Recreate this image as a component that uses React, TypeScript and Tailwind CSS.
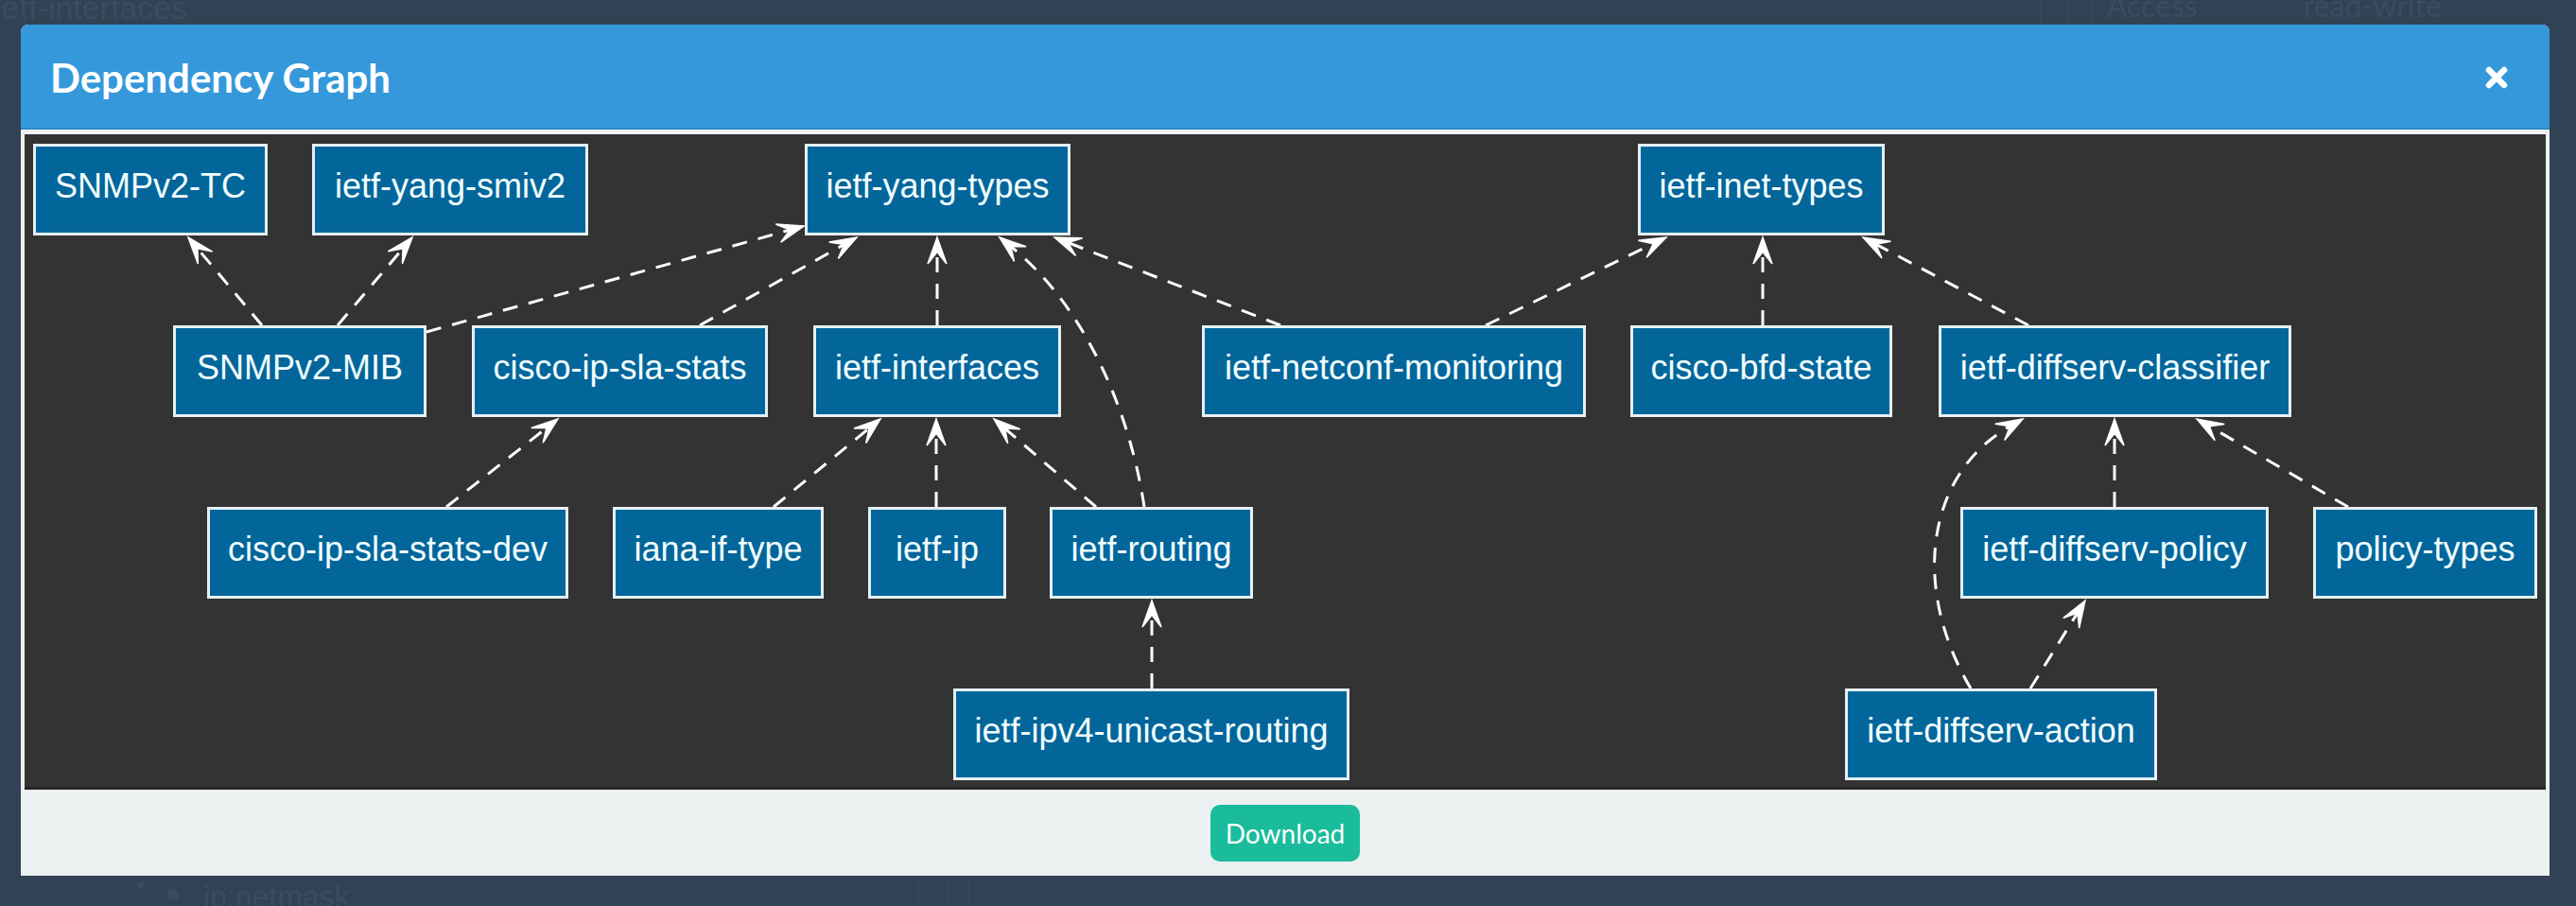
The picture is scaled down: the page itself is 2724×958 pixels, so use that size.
import React from "react";

type P = [number, number];
type Node = { label: string; x: number; row: number; w: number };
type Edge = { s: P; t: P; c?: [P, P] };

const ROWS = [10, 202, 394, 586];

const nodes: Node[] = [
  { label: "SNMPv2-TC", x: 9, row: 0, w: 248 },
  { label: "ietf-yang-smiv2", x: 304, row: 0, w: 292 },
  { label: "ietf-yang-types", x: 825, row: 0, w: 281 },
  { label: "ietf-inet-types", x: 1706, row: 0, w: 261 },
  { label: "SNMPv2-MIB", x: 157, row: 1, w: 268 },
  { label: "cisco-ip-sla-stats", x: 473, row: 1, w: 313 },
  { label: "ietf-interfaces", x: 834, row: 1, w: 262 },
  { label: "ietf-netconf-monitoring", x: 1245, row: 1, w: 406 },
  { label: "cisco-bfd-state", x: 1698, row: 1, w: 277 },
  { label: "ietf-diffserv-classifier", x: 2024, row: 1, w: 373 },
  { label: "cisco-ip-sla-stats-dev", x: 193, row: 2, w: 382 },
  { label: "iana-if-type", x: 622, row: 2, w: 223 },
  { label: "ietf-ip", x: 892, row: 2, w: 146 },
  { label: "ietf-routing", x: 1084, row: 2, w: 215 },
  { label: "ietf-diffserv-policy", x: 2047, row: 2, w: 326 },
  { label: "policy-types", x: 2420, row: 2, w: 237 },
  { label: "ietf-ipv4-unicast-routing", x: 982, row: 3, w: 419 },
  { label: "ietf-diffserv-action", x: 1925, row: 3, w: 330 },
];

const edges: Edge[] = [
  { s: [251, 202], t: [173, 109] },
  { s: [331, 202], t: [410, 109] },
  { s: [425, 209], t: [824, 97] },
  { s: [714, 202], t: [880, 109] },
  { s: [965, 202], t: [965, 109] },
  { s: [1184, 394], t: [1031, 109], c: [[1170, 300], [1125, 185]] },
  { s: [1328, 202], t: [1089, 109] },
  { s: [1545, 202], t: [1736, 109] },
  { s: [1838, 202], t: [1838, 109] },
  { s: [2119, 202], t: [1944, 109] },
  { s: [446, 394], t: [564, 301] },
  { s: [792, 394], t: [905, 301] },
  { s: [964, 394], t: [964, 301] },
  { s: [1133, 394], t: [1025, 301] },
  { s: [1192, 586], t: [1192, 493] },
  { s: [2210, 394], t: [2210, 301] },
  { s: [2457, 394], t: [2297, 301] },
  { s: [2058, 586], t: [2113, 301], c: [[1995, 480], [2010, 360]] },
  { s: [2121, 586], t: [2179, 493] },
];

const L = 28;
const W = 10;

function EdgeView({ e }: { e: Edge }) {
  const from = e.c ? e.c[1] : e.s;
  let dx = from[0] - e.t[0];
  let dy = from[1] - e.t[1];
  const len = Math.hypot(dx, dy) || 1;
  dx /= len;
  dy /= len;
  const nx = -dy;
  const ny = dx;
  const tip = e.t;
  const b1: P = [tip[0] + dx * L + nx * W, tip[1] + dy * L + ny * W];
  const b2: P = [tip[0] + dx * L - nx * W, tip[1] + dy * L - ny * W];
  const notch: P = [tip[0] + dx * L * 0.55, tip[1] + dy * L * 0.55];
  const d = e.c
    ? `M${e.s[0]},${e.s[1]} C${e.c[0][0]},${e.c[0][1]} ${e.c[1][0]},${e.c[1][1]} ${notch[0]},${notch[1]}`
    : `M${e.s[0]},${e.s[1]} L${notch[0]},${notch[1]}`;
  return (
    <g>
      <path d={d} fill="none" stroke="#ffffff" strokeWidth={3} strokeDasharray="16 12" />
      <polygon
        points={`${tip[0]},${tip[1]} ${b1[0]},${b1[1]} ${notch[0]},${notch[1]} ${b2[0]},${b2[1]}`}
        fill="#ffffff"
        stroke="#ffffff"
        strokeWidth={1.5}
        strokeLinejoin="miter"
      />
    </g>
  );
}

export default function App() {
  return (
    <div className="relative w-[2724px] h-[958px] overflow-hidden bg-[#314255] font-['Lato',sans-serif]">
      {/* dimmed page behind the modal */}
      <div className="flex flex-col justify-between h-full">
        <div className="flex items-start h-[30px]">
          <div className="mt-[-12px] ml-[-6px] text-[34px] leading-[40px] text-[#3b4c5f] font-['Liberation_Sans',sans-serif]">
            ietf-interfaces
          </div>
          <div className="ml-auto flex items-start h-[30px]">
            <div className="w-[1px] h-[30px] bg-[#394a5d]" />
            <div className="ml-[28px] w-[1px] h-[30px] bg-[#394a5d]" />
            <div className="ml-[24px] w-[1px] h-[30px] bg-[#394a5d]" />
            <div className="ml-[16px] mt-[-14px] text-[32px] leading-[40px] text-[#3b4c5f]">Access</div>
            <div className="ml-[112px] mt-[-14px] text-[32px] leading-[40px] text-[#3b4c5f]">read-write</div>
            <div className="w-[142px]" />
          </div>
        </div>
        <div className="flex items-end h-[30px]">
          <div className="ml-[141px] mb-[14px] text-[16px] leading-none text-[#3b4c5f]">▼</div>
          <div className="ml-[20px] mb-[6px] w-[12px] h-[12px] rounded-full bg-[#3b4c5f]" />
          <div className="ml-[26px] mb-[-10px] text-[32px] leading-[40px] text-[#3b4c5f] font-['Liberation_Sans',sans-serif]">
            ip:netmask
          </div>
          <div className="ml-[600px] w-[1px] h-[30px] bg-[#394a5d]" />
          <div className="ml-[30px] w-[1px] h-[30px] bg-[#394a5d]" />
          <div className="ml-[22px] w-[1px] h-[30px] bg-[#394a5d]" />
        </div>
      </div>

      {/* modal */}
      <div className="absolute left-[22px] top-[26px] w-[2674px] h-[900px] flex flex-col rounded-t-[8px] overflow-hidden bg-[#ecf0f1]">
        <div className="h-[111px] shrink-0 flex items-center justify-between bg-[#3498db] border-b-[2px] border-[#2c86c4] pl-[31px] pr-[44px]">
          <div className="text-white font-bold text-[42px] leading-none mt-[2px]">Dependency Graph</div>
          <svg width="24" height="24" viewBox="0 0 24 24" className="mt-[2px]">
            <path d="M4 4 L20 20 M20 4 L4 20" stroke="#ffffff" strokeWidth={6.5} strokeLinecap="round" fill="none" />
          </svg>
        </div>
        <div className="px-[4px] pt-[5px] shrink-0">
          <div className="relative w-[2666px] h-[693px] bg-[#333333] border-b-[3px] border-[#262626]">
            <svg className="absolute left-0 top-0" width="2666" height="693" viewBox="0 0 2666 693">
              {edges.map((e, i) => (
                <EdgeView key={i} e={e} />
              ))}
            </svg>
            {nodes.map((n) => (
              <div
                key={n.label}
                className="absolute flex items-center justify-center pb-[8px] h-[97px] bg-[#03669b] border-[3px] border-[#e4f0f4] text-[#f2ffff] text-[36px] leading-none whitespace-nowrap font-['Liberation_Sans',sans-serif]"
                style={{ left: n.x, top: ROWS[n.row], width: n.w }}
              >
                {n.label}
              </div>
            ))}
          </div>
        </div>
        <div className="flex-1 flex items-center justify-center">
          <button className="h-[60px] px-[16px] rounded-[10px] bg-[#1abc9c] text-white text-[28px] leading-none">
            Download
          </button>
        </div>
      </div>
    </div>
  );
}
